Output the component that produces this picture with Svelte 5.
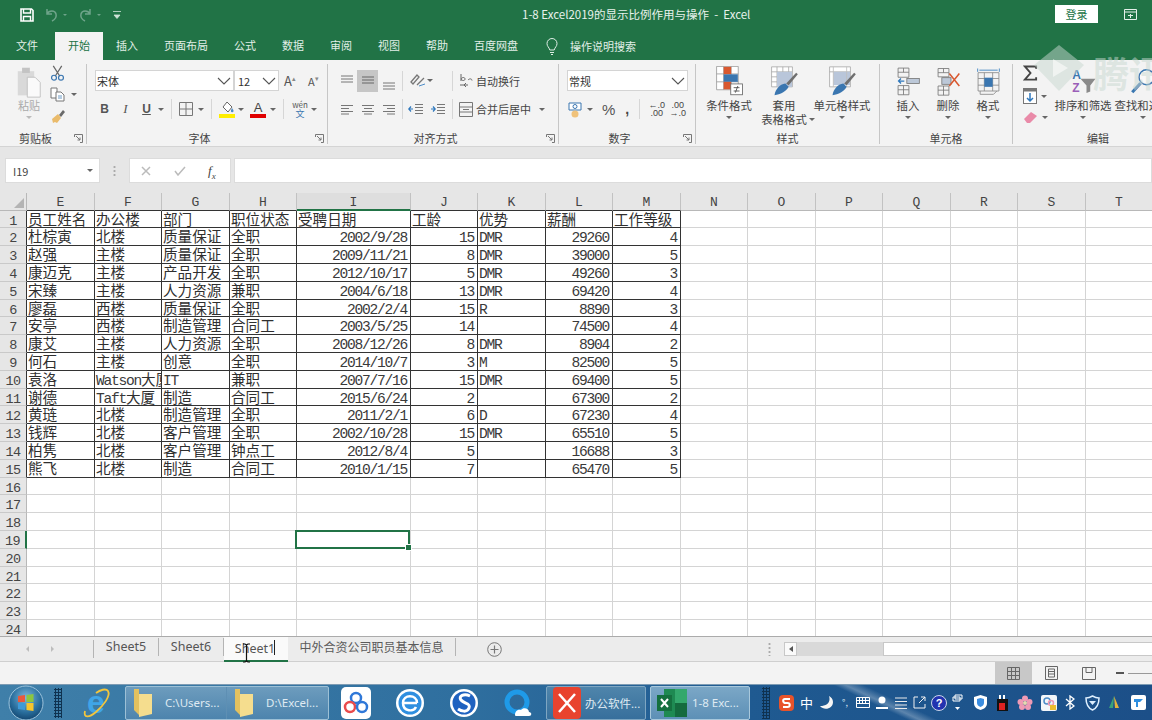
<script>
	const tabs = ['开始', '插入', '页面布局', '公式', '数据', '审阅', '视图', '帮助', '百度网盘'];
	const columns = [
		['E', 68], ['F', 67], ['G', 68], ['H', 67], ['I', 114], ['J', 67], ['K', 68], ['L', 67], ['M', 68],
		['N', 67], ['O', 68], ['P', 67], ['Q', 68], ['R', 67], ['S', 68], ['T', 67]
	];
	const template = '27px ' + columns.map((c) => c[1] + 'px').join(' ');
	const rightAligned = [4, 5, 7, 8];

	const rows = [
		['员工姓名', '办公楼', '部门', '职位状态', '受聘日期', '工龄', '优势', '薪酬', '工作等级'],
		['杜棕寅', '北楼', '质量保证', '全职', '2002/9/28', '15', 'DMR', '29260', '4'],
		['赵强', '主楼', '质量保证', '全职', '2009/11/21', '8', 'DMR', '39000', '5'],
		['康迈克', '主楼', '产品开发', '全职', '2012/10/17', '5', 'DMR', '49260', '3'],
		['宋臻', '主楼', '人力资源', '兼职', '2004/6/18', '13', 'DMR', '69420', '4'],
		['廖磊', '西楼', '质量保证', '全职', '2002/2/4', '15', 'R', '8890', '3'],
		['安亭', '西楼', '制造管理', '合同工', '2003/5/25', '14', '', '74500', '4'],
		['康艾', '主楼', '人力资源', '全职', '2008/12/26', '8', 'DMR', '8904', '2'],
		['何石', '主楼', '创意', '全职', '2014/10/7', '3', 'M', '82500', '5'],
		['袁洛', 'Watson大厦', 'IT', '兼职', '2007/7/16', '15', 'DMR', '69400', '5'],
		['谢德', 'Taft大厦', '制造', '合同工', '2015/6/24', '2', '', '67300', '2'],
		['黄琏', '北楼', '制造管理', '全职', '2011/2/1', '6', 'D', '67230', '4'],
		['钱辉', '北楼', '客户管理', '全职', '2002/10/28', '15', 'DMR', '65510', '5'],
		['柏隽', '北楼', '客户管理', '钟点工', '2012/8/4', '5', '', '16688', '3'],
		['熊飞', '北楼', '制造', '合同工', '2010/1/15', '7', '', '65470', '5']
	];

	const rowNumbers = Array.from({ length: 24 }, (_, i) => i + 1);

	function parts(text) {
		return text.split(/([A-Za-z0-9/]+)/).filter(Boolean);
	}
	function isAscii(part) {
		return /^[A-Za-z0-9/]+$/.test(part);
	}
</script>

{#snippet caret()}<i class="caret"></i>{/snippet}
{#snippet launcher()}
	<svg class="launcher" width="9" height="9" viewBox="0 0 9 9"><path d="M.5 3V.5H8.500V8.500H6M2 2l4 4M6 3.500V6H3.500" fill="none" stroke="#777"/></svg>
{/snippet}
{#snippet chevron()}
	<svg class="chevron" width="14" height="8" viewBox="0 0 14 8"><path d="M1 1l6 6 6-6" fill="none" stroke="#555" stroke-width="1.100"/></svg>
{/snippet}
{#snippet lines(kind)}
	<svg width="14" height="11" viewBox="0 0 14 11">
		{#if kind === 'left'}<path d="M1 1.500h12M1 4.500h8M1 7.500h12M1 10h8" stroke="#777" fill="none"/>{/if}
		{#if kind === 'center'}<path d="M1 1.500h12M3 4.500h8M1 7.500h12M3 10h8" stroke="#777" fill="none"/>{/if}
		{#if kind === 'right'}<path d="M1 1.500h12M5 4.500h8M1 7.500h12M5 10h8" stroke="#777" fill="none"/>{/if}
	</svg>
{/snippet}

<div class="window">
	<header class="titlebar">
		<div class="qat">
			<svg width="16" height="16" viewBox="0 0 16 16"><path d="M2 2h10.500L14 3.500V14H2z" fill="none" stroke="#fff" stroke-width="1.600"/><path d="M4.500 2v4h7V2M4.500 14V9.500h7V14" fill="none" stroke="#fff" stroke-width="1.400"/></svg>
			<svg width="26" height="14" viewBox="0 0 26 14"><path d="M4 1v5h5M4 6c2-4 8-4 9 0s-2 6-4 7" fill="none" stroke="#6ea48a" stroke-width="1.500"/><path d="M20 6l2 2 2-2" fill="#6ea48a"/></svg>
			<svg width="26" height="14" viewBox="0 0 26 14"><path d="M13 1v5H8M13 6c-2-4-8-4-9 0s2 6 4 7" fill="none" stroke="#6ea48a" stroke-width="1.500"/><path d="M20 6l2 2 2-2" fill="#6ea48a"/></svg>
			<svg width="10" height="10" viewBox="0 0 10 10"><path d="M1 1.500h8M2 5h6l-3 3.500z" fill="#cfe3d8" stroke="#cfe3d8" stroke-width=".8"/></svg>
		</div>
		<div class="doc-title">1-8 Excel2019的显示比例作用与操作&nbsp;&nbsp;-&nbsp;&nbsp;Excel</div>
		<button class="login">登录</button>
		<svg class="restore" width="13" height="11" viewBox="0 0 13 11"><path d="M.5.500h12v10H.500zM.5 3h12M4 6.500h5M6.500 5v4" fill="none" stroke="#e5f0ea"/></svg>
	</header>

	<nav class="tabs">
		<span class="tab first">文件</span>
		{#each tabs as tab}
			<span class="tab" class:active={tab === '开始'}>{tab}</span>
		{/each}
		<svg class="bulb" width="12" height="17" viewBox="0 0 12 17"><path d="M3.800 12C3 9 1 8.500 1 5.500a5 5 0 0 1 10 0C11 8.500 9 9 8.200 12zM4 14.500h4M5 16.500h2" fill="none" stroke="#dfeee6"/></svg>
		<span class="tell">操作说明搜索</span>
	</nav>

	<section class="ribbon">
		<div class="group clip">
			<div class="body">
				<div class="paste">
					<svg width="26" height="32" viewBox="0 0 28 37">
						<rect x="1" y="6" width="19" height="28" fill="#d9d9d9"/>
						<rect x="6" y="2" width="9" height="6" fill="#c3c3c3"/>
						<path d="M12 13h9l6 6v17H12z" fill="#fafafa" stroke="#bdbdbd"/>
					</svg>
					<span>粘贴</span>
					<i class="caret light"></i>
				</div>
				<div class="clip-tools">
					<svg width="15" height="16" viewBox="0 0 15 17"><path d="M3 1l7 11M12 1L5 12" stroke="#666" stroke-width="1.300" fill="none"/><circle cx="3.800" cy="13.500" r="2.600" fill="none" stroke="#3a76b0" stroke-width="1.300"/><circle cx="11.200" cy="13.500" r="2.600" fill="none" stroke="#3a76b0" stroke-width="1.300"/></svg>
					<span class="with-caret">
						<svg width="15" height="15" viewBox="0 0 15 15"><path d="M1 1h6v10H1z" fill="#fff" stroke="#777"/><path d="M6 5h5l3 3v6H6z" fill="#fff" stroke="#777"/><path d="M8 9h4M8 11h4" stroke="#6d9ac4"/></svg>
						{@render caret()}
					</span>
					<svg width="17" height="16" viewBox="0 0 17 16"><path d="M9 7l4-5 2 2-4 5z" fill="#6a6a6a"/><path d="M2 11l6-5 3 4-4 5-2-1-2 1z" fill="#eabb6b"/></svg>
				</div>
			</div>
			<div class="label"><span></span><span class="label-text">剪贴板</span>{@render launcher()}</div>
		</div>

		<div class="group font">
			<div class="body">
				<div class="row top">
					<div class="select name">宋体{@render chevron()}</div>
					<div class="select size">12{@render chevron()}</div>
					<span class="grow-a">A<sup>▴</sup></span>
					<span class="grow-a small">A<sup>▾</sup></span>
				</div>
				<div class="row bottom">
					<b class="fmt">B</b>
					<i class="fmt italic">I</i>
					<u class="fmt strong">U</u>
					<span class="u-caret">{@render caret()}</span>
					<i class="vsep"></i>
					<span class="with-caret g5">
						<svg width="14" height="14" viewBox="0 0 14 14"><path d="M.5.500h13v13H.500zM7 .5v13M.5 7h13" fill="none" stroke="#777"/></svg>
						{@render caret()}
					</span>
					<i class="vsep"></i>
					<span class="with-caret g2">
						<svg width="17" height="17" viewBox="0 0 17 17"><path d="M8 1l5 5-4 5-5-5z" fill="#fff" stroke="#666"/><path d="M13 7c1 1.500 1.500 2 1.500 3a1.300 1.300 0 0 1-2.600 0c0-1 .6-1.500 1.100-3z" fill="#4d8cc7"/><rect y="13" width="16" height="4" fill="#ffee00"/></svg>
						{@render caret()}
					</span>
					<span class="with-caret g4">
						<span class="font-color">A</span>
						{@render caret()}
					</span>
					<i class="vsep"></i>
					<span class="with-caret g2">
						<span class="wen"><small>wén</small>文</span>
						{@render caret()}
					</span>
				</div>
			</div>
			<div class="label"><span></span><span class="label-text">字体</span>{@render launcher()}</div>
		</div>

		<div class="group align">
			<div class="body">
				<div class="row top">
					<span class="al"><svg width="14" height="11" viewBox="0 0 14 11"><path d="M1 1h12M1 4h12M1 7h12" stroke="#777" fill="none"/></svg></span>
					<span class="al on"><svg width="14" height="11" viewBox="0 0 14 11"><path d="M1 2h12M1 5h12M1 8h12" stroke="#666" fill="none"/></svg></span>
					<span class="al low"><svg width="14" height="11" viewBox="0 0 14 11"><path d="M1 4h12M1 7h12M1 10h12" stroke="#777" fill="none"/></svg></span>
					<i class="vsep first-sep"></i>
					<span class="with-caret orient">
						<svg width="17" height="14" viewBox="0 0 17 14"><path d="M1 8l6-7 2 2-6 7zM7 11l7-7" fill="none" stroke="#777" stroke-width="1.300"/><path d="M9 12l6-2" stroke="#4d8cc7"/></svg>
						{@render caret()}
					</span>
					<i class="vsep wrap-sep"></i>
					<span class="wrap">
						<svg width="14" height="16" viewBox="0 0 14 16"><path d="M2 1v7M2 6c1-2 4-2 4 0s-3 2-4 0M9 7c2-2 4-1 4 .5M1 12h8M7 10l-2 2 2 2" fill="none" stroke="#666"/></svg>
						自动换行
					</span>
				</div>
				<div class="row bottom">
					<span class="al">{@render lines('left')}</span>
					<span class="al">{@render lines('center')}</span>
					<span class="al">{@render lines('right')}</span>
					<i class="vsep indent-sep"></i>
					<svg class="indent" width="15" height="12" viewBox="0 0 15 12"><path d="M7 1.500h8M7 4.500h8M7 7.500h8M7 10.500h8" stroke="#777"/><path d="M5 6H1M3 3.500L.8 6 3 8.500" fill="none" stroke="#2f78bd" stroke-width="1.200"/></svg>
					<svg class="indent" width="15" height="12" viewBox="0 0 15 12"><path d="M7 1.500h8M7 4.500h8M7 7.500h8M7 10.500h8" stroke="#777"/><path d="M1 6h4M3 3.500L5.200 6 3 8.500" fill="none" stroke="#2f78bd" stroke-width="1.200"/></svg>
					<i class="vsep merge-sep"></i>
					<span class="wrap">
						<svg width="14" height="15" viewBox="0 0 14 15"><path d="M.5.500h13v14H.500zM.5 5h13M.5 10h13M4 7.500h6" fill="none" stroke="#777"/></svg>
						合并后居中
					</span>
					<span class="merge-caret">{@render caret()}</span>
				</div>
			</div>
			<div class="label"><span></span><span class="label-text">对齐方式</span>{@render launcher()}</div>
		</div>

		<div class="group number">
			<div class="body">
				<div class="row top">
					<div class="select general">常规{@render chevron()}</div>
				</div>
				<div class="row bottom">
					<span class="with-caret">
						<svg width="17" height="17" viewBox="0 0 17 17"><path d="M2 2h12v7H2z" fill="#fff" stroke="#3a76b0"/><circle cx="8" cy="5.500" r="2" fill="none" stroke="#3a76b0"/><circle cx="8" cy="13" r="3.500" fill="#f0c27a"/></svg>
						{@render caret()}
					</span>
					<span class="percent">%</span>
					<span class="comma">,</span>
					<i class="vsep"></i>
					<span class="decimal"><small>←.0</small><small>.00</small></span>
					<span class="decimal"><small>.00</small><small>→.0</small></span>
				</div>
			</div>
			<div class="label"><span></span><span class="label-text">数字</span>{@render launcher()}</div>
		</div>

		<div class="group styles">
			<div class="body big-row">
				<div class="big w60">
					<svg width="32" height="36" viewBox="0 0 32 36">
						<path d="M.5.500h26v28H.500zM9 .5v28M18 .5v28M.5 9.500h26M.5 19h26" fill="#fff" stroke="#9a9a9a"/>
						<rect x="9" y="1" width="9" height="9" fill="#d9582f"/><rect x="9" y="10" width="17" height="9" fill="#3a76b0"/><rect x="9" y="19" width="9" height="9" fill="#d9582f"/>
						<rect x="17.500" y="21.500" width="14" height="13" fill="#fff" stroke="#666"/>
						<path d="M21 26h7M21 30h7M23 32l3-8" stroke="#444" fill="none"/>
					</svg>
					<span>条件格式</span>
					{@render caret()}
				</div>
				<div class="big w50">
					<svg width="32" height="36" viewBox="0 0 32 36">
						<path d="M.5 1h25v24H.500zM7 1v24M14 1v24M21 1v24M.5 7h25M.5 13h25M.5 19h25" fill="#fff" stroke="#a8a8a8"/>
						<rect x="7" y="7" width="18" height="18" fill="#b9c6da"/>
						<path d="M30 8l2 2-11 13-3-2z" fill="#6f6f6f"/>
						<path d="M4 35c1-7 6-13 13-14l4 4c-3 6-10 9-17 10z" fill="#3a76b0"/>
					</svg>
					<span>套用</span>
					<span class="nowrap">表格格式{@render caret()}</span>
				</div>
				<div class="big w66">
					<svg width="32" height="36" viewBox="0 0 32 36">
						<path d="M.5 1h25v24H.500zM.5 7h25" fill="#fff" stroke="#a8a8a8"/>
						<rect x="5" y="7" width="20" height="16" fill="#b9c6da"/>
						<path d="M5 1v24M21 1v24" stroke="#bdbdbd"/>
						<path d="M30 8l2 2-11 13-3-2z" fill="#6f6f6f"/>
						<path d="M4 35c1-7 6-13 13-14l4 4c-3 6-10 9-17 10z" fill="#3a76b0"/>
					</svg>
					<span>单元格样式</span>
					{@render caret()}
				</div>
			</div>
			<div class="label plain"><span class="label-text">样式</span></div>
		</div>

		<div class="group cells">
			<div class="body big-row">
				<div class="big w40">
					<svg width="28" height="36" viewBox="0 0 28 36">
						<path d="M1.500 3h13v11h-13zM8 3v5M1.500 8h13M1.500 24h13v11h-13zM8 24v11M1.500 29h13" fill="none" stroke="#777" transform="translate(0 -.5)"/>
						<rect x="12" y="15" width="15" height="6" fill="#bcc8d8" stroke="#777"/>
						<path d="M9 18H2M5 15l-3 3 3 3" fill="none" stroke="#2f78bd" stroke-width="1.500"/>
					</svg>
					<span>插入</span>
					{@render caret()}
				</div>
				<div class="big w40">
					<svg width="28" height="36" viewBox="0 0 28 36">
						<path d="M1.500 3h13v10h-13zM8 3v5M1.500 8h13M1.500 24h13v11h-13zM8 24v11M1.500 29h13" fill="none" stroke="#777"/>
						<rect x="6" y="14" width="11" height="8" fill="#bcc8d8" stroke="#777"/>
						<path d="M15 9l12 15M27 9L15 24" stroke="#d9582f" stroke-width="1.800"/>
					</svg>
					<span>删除</span>
					{@render caret()}
				</div>
				<div class="big w40">
					<svg width="28" height="36" viewBox="0 0 28 36">
						<path d="M1 3v4M27 3v4M3 5h22" stroke="#2f78bd" fill="none"/>
						<path d="M1.500 8h25v22h-25zM9 8v22M19 8v22M1.500 15h25M1.500 23h25M4 30v4h16l4-4" fill="none" stroke="#888"/>
						<rect x="9" y="14" width="10" height="11" fill="#3a76b0"/>
					</svg>
					<span>格式</span>
					{@render caret()}
				</div>
			</div>
			<div class="label plain"><span class="label-text">单元格</span></div>
		</div>

		<div class="group edit">
			<div class="body big-row">
				<div class="edit-tools">
					<svg width="15" height="16" viewBox="0 0 16 17"><path d="M14 4V1.500H2L8 8.500 2 15.500h12V13" fill="none" stroke="#444" stroke-width="2"/></svg>
					<span class="with-caret">
						<svg width="14" height="16" viewBox="0 0 14 16"><rect x=".5" y=".5" width="13" height="15" fill="#fff" stroke="#777"/><rect x=".5" y=".5" width="13" height="3" fill="#777"/><path d="M7 5v8M4 10l3 3 3-3" fill="none" stroke="#2f78bd" stroke-width="1.500"/></svg>
						{@render caret()}
					</span>
					<span class="with-caret">
						<svg width="15" height="13" viewBox="0 0 15 13"><path d="M1 8l7-7 6 4-7 7H4z" fill="#e98aa8"/></svg>
						{@render caret()}
					</span>
				</div>
				<div class="big w60 plain-w">
					<svg width="36" height="36" viewBox="0 0 36 36">
						<text x="3" y="15" class="az blue">A</text>
						<text x="3" y="32" class="az purple">Z</text>
						<path d="M14 15h20l-7 9v8l-5 2V24z" fill="#8a8a8a"/>
					</svg>
					<span>排序和筛选</span>
					{@render caret()}
				</div>
				<div class="big w60 plain-w">
					<svg width="36" height="36" viewBox="0 0 36 36">
						<circle cx="22" cy="13" r="10" fill="#fff" fill-opacity=".5" stroke="#3a76b0" stroke-width="2"/>
						<path d="M14 21L3 33" stroke="#3a76b0" stroke-width="4"/>
					</svg>
					<span>查找和选择</span>
					{@render caret()}
				</div>
			</div>
			<div class="label plain edit-label"><span class="label-text">编辑</span></div>
		</div>
	</section>

	<section class="formula">
		<div class="name-box">I19{@render caret()}</div>
		<div class="grip"></div>
		<div class="fx-box">
			<svg width="10" height="10" viewBox="0 0 10 10"><path d="M1 1l8 8M9 1L1 9" stroke="#bbb" stroke-width="1.500"/></svg>
			<svg width="12" height="10" viewBox="0 0 12 10"><path d="M1 5l3 4 7-8" stroke="#bbb" stroke-width="1.500" fill="none"/></svg>
			<em>f<sub>x</sub></em>
		</div>
		<div class="input"></div>
	</section>

	<section class="sheet" style="grid-template-columns: {template}">
		<div class="corner"><i></i></div>
		{#each columns as col, c}
			<div class="col-head" class:selected-col={col[0] === 'I'} class:table-col={c < 9}>{col[0]}</div>
		{/each}
		{#each rowNumbers as n}
			<div class="row-head" class:table-row={n <= 15} class:selected-row={n === 19}>{n}</div>
			{#each columns as col, c}
				{@const value = n <= 15 && c < 9 ? rows[n - 1][c] : ''}
				<div
					class="cell"
					class:boxed={n <= 15 && c < 9}
					class:num={n > 1 && rightAligned.includes(c)}
					class:current={n === 19 && col[0] === 'I'}
				>
					{#each parts(value) as part}
						{#if isAscii(part)}<span class="ascii">{part}</span>{:else}{part}{/if}
					{/each}
					{#if n === 19 && col[0] === 'I'}<i class="frame"><i class="handle"></i></i>{/if}
				</div>
			{/each}
		{/each}
	</section>

	<section class="sheetbar">
		<div class="nav-arrows"><i class="arrow left"></i><i class="arrow right"></i></div>
		<span class="sheet-tab">Sheet5</span>
		<span class="sheet-tab">Sheet6</span>
		<span class="sheet-tab active">Sheet1<i class="text-caret"></i>
			<svg class="ibeam" width="9" height="20" viewBox="0 0 9 20"><path d="M1 1h2l1.500 1L6 1h2M4.500 2v16M1 19h2l1.500-1L6 19h2" fill="none" stroke="#111" stroke-width="1.200"/></svg>
		</span>
		<span class="sheet-tab last">中外合资公司职员基本信息</span>
		<svg class="add" width="15" height="15" viewBox="0 0 15 15"><circle cx="7.500" cy="7.500" r="6.800" fill="none" stroke="#777"/><path d="M7.500 3.500v8M3.500 7.500h8" stroke="#777" stroke-width="1.200"/></svg>
		<div class="hscroll">
			<i class="dots"></i>
			<span class="scroll-btn"><i></i></span>
			<span class="track"></span>
			<span class="thumb"></span>
		</div>
	</section>

	<footer class="status">
		<span class="view on"><svg width="13" height="13" viewBox="0 0 13 13"><path d="M.5.500h12v12H.500zM4.500.5v12M8.500.5v12M.5 4.500h12M.5 8.500h12" fill="none" stroke="#666"/></svg></span>
		<span class="view"><svg width="13" height="14" viewBox="0 0 13 14"><path d="M.5.500h12v13H.500zM3.500 3h6v8h-6zM3.500 5.500h6M3.500 8h6" fill="none" stroke="#666"/></svg></span>
		<span class="view"><svg width="14" height="13" viewBox="0 0 14 13"><path d="M.5.500h13v12H.500zM4 .5v5h6V.500" fill="none" stroke="#666"/></svg></span>
		<span class="zoom-minus"></span>
		<span class="zoom-line"></span>
	</footer>

	<div class="taskbar">
		<svg class="orb" width="36" height="36" viewBox="0 0 36 36">
			<defs>
				<radialGradient id="orbfill" cx=".5" cy=".35" r=".7"><stop offset="0" stop-color="#7fb9dc"/><stop offset=".6" stop-color="#2a6f9e"/><stop offset="1" stop-color="#0f3f68"/></radialGradient>
			</defs>
			<circle cx="18" cy="18" r="17" fill="url(#orbfill)" stroke="#9cc3dc"/>
			<path d="M10 11l7-1v7h-7z" fill="#e9593c"/><path d="M18.500 10l7-1v8h-7z" fill="#8cc63f"/><path d="M10 18h7v7l-7-1z" fill="#3f9ad8"/><path d="M18.500 18h7v8l-7-1z" fill="#f7c52d"/>
		</svg>
		<i class="task-dots"></i>
		<svg class="ie" width="32" height="32" viewBox="0 0 32 32">
			<text x="16" y="26" class="ie-e">e</text>
			<path d="M5 24C3 31 9 31 16 25S31 9 28 4c-2-3-8-1-12 2" fill="none" stroke="#f3c63d" stroke-width="1.800"/>
		</svg>
		<div class="win-group">
			<span class="task-btn folder-btn">
				<svg width="20" height="30" viewBox="0 0 20 30"><path d="M1 1h5v26L1 22z" fill="#e3c15f"/><path d="M6 6h13v20l-13 3z" fill="#f5dd8e"/></svg>
				<span>C:\Users...</span>
			</span>
			<span class="task-btn folder-btn">
				<svg width="20" height="30" viewBox="0 0 20 30"><path d="M1 1h5v26L1 22z" fill="#e3c15f"/><path d="M6 6h13v20l-13 3z" fill="#f5dd8e"/></svg>
				<span>D:\Excel...</span>
			</span>
		</div>
		<div class="app-icons">
			<svg width="30" height="32" viewBox="0 0 30 32"><rect width="30" height="32" rx="5" fill="#fff"/><circle cx="15" cy="11" r="5" fill="none" stroke="#2f78d8" stroke-width="2.500"/><circle cx="9" cy="20" r="5" fill="none" stroke="#e94b4b" stroke-width="2.500"/><circle cx="21" cy="20" r="5" fill="none" stroke="#2f78d8" stroke-width="2.500"/></svg>
			<svg width="30" height="30" viewBox="0 0 30 30"><circle cx="15" cy="15" r="14" fill="#fff"/><circle cx="15" cy="15" r="11.500" fill="#2f8fe0"/><path d="M8 15h14M22 15c0-9-14-9-14 0s11 9 13 4" fill="none" stroke="#fff" stroke-width="2.500"/></svg>
			<svg width="30" height="30" viewBox="0 0 30 30"><circle cx="15" cy="15" r="14" fill="#fff"/><circle cx="15" cy="15" r="11.500" fill="#1f62c0"/><path d="M21 8c-6-3-12 0-9 4s10 3 8 8-8 3-11 1" fill="none" stroke="#fff" stroke-width="3"/></svg>
			<svg width="30" height="30" viewBox="0 0 30 30"><circle cx="14" cy="14" r="10" fill="none" stroke="#1f9ae8" stroke-width="5"/><path d="M12 27c0-5 4-6 6-5 2-3 8-2 8 2 3 0 3 4 0 4H14c-1 0-2 0-2-1z" fill="#fff"/></svg>
		</div>
		<span class="task-btn wps">
			<svg width="28" height="32" viewBox="0 0 28 32"><rect width="28" height="32" rx="4" fill="#e8432e"/><path d="M6 7l16 18M22 7L6 25" stroke="#fff" stroke-width="2.500"/></svg>
			<span>办公软件...</span>
		</span>
		<span class="task-btn excel">
			<svg width="30" height="28" viewBox="0 0 30 28"><rect x="7" width="23" height="28" fill="#1e8a52"/><rect x="18" y="0" width="12" height="14" fill="#33a86c"/><rect x="18" y="14" width="12" height="14" fill="#146b3e"/><rect y="6" width="15" height="16" fill="#15703f"/><path d="M4 10l7 8M11 10l-7 8" stroke="#fff" stroke-width="2"/></svg>
			<span>1-8 Exc...</span>
		</span>
		<i class="task-dots tray-dots"></i>
		<div class="tray">
			<svg width="15" height="16" viewBox="0 0 15 16"><rect width="15" height="16" rx="4" fill="#e8532a"/><path d="M11 4H6C3 4 4 8 6.500 8h2c3 0 3 4 0 4H4" fill="none" stroke="#fff" stroke-width="2"/></svg>
			<span class="tray-text">中</span>
			<svg width="15" height="15" viewBox="0 0 15 15"><path d="M10 1c2 6-2 10-9 10 4 5 13 3 13-4 0-3-2-5-4-6z" fill="#f5f5f5"/></svg>
			<span class="tray-dots-small">°,</span>
			<svg width="14" height="11" viewBox="0 0 14 11"><path d="M.5.500h13v10H.500zM.5 3.500h13M.5 6.500h13M3.500.5v6M6.500.5v6M9.500.5v6" fill="none" stroke="#fff"/></svg>
			<svg width="14" height="14" viewBox="0 0 14 14"><circle cx="7" cy="4" r="3.500" fill="#fff"/><path d="M1 11h12v2H1z" fill="#fff"/></svg>
			<svg width="14" height="14" viewBox="0 0 14 14"><path d="M1 2h12M1 5.500h12M1 9h12M1 12.500h12" stroke="#eaeaea"/></svg>
			<svg width="13" height="13" viewBox="0 0 13 13"><path d="M5 1H1v11h11V8M6 7l6-6M8 1h4v4" fill="none" stroke="#f0f0f0"/></svg>
			<svg width="16" height="16" viewBox="0 0 16 16"><circle cx="8" cy="8" r="7.500" fill="#2233b0" stroke="#cdd6ea"/><text x="8" y="12" class="q">?</text></svg>
			<svg width="11" height="18" viewBox="0 0 11 18"><path d="M3 1h7v4H3zM1 3h7v4H1z" fill="none" stroke="#fff"/><path d="M3 13h5l-2.500 3z" fill="#fff"/></svg>
			<div class="tray-right">
				<svg width="15" height="17" viewBox="0 0 15 17"><path d="M7.500 1L14 3v6c0 4-3 6-6.500 7C4 15 1 13 1 9V3z" fill="#fff"/><path d="M7.500 4L11 5v4c0 2-1.500 3-3.500 4C5.500 12 4 11 4 9V5z" fill="#3b8de0"/></svg>
				<svg width="13" height="18" viewBox="0 0 13 18"><rect x="1" y="5" width="11" height="12" fill="#111"/><rect x="3" y="9" width="6" height="7" fill="#d22"/><path d="M4 5V1M8 5V1" stroke="#fff" stroke-width="2"/></svg>
				<svg width="16" height="16" viewBox="0 0 16 16"><circle cx="8" cy="3.500" r="3" fill="#ef9ab5"/><circle cx="3.500" cy="7" r="3" fill="#ef9ab5"/><circle cx="12.500" cy="7" r="3" fill="#ef9ab5"/><circle cx="5" cy="12" r="3" fill="#ef9ab5"/><circle cx="11" cy="12" r="3" fill="#ef9ab5"/><circle cx="8" cy="8" r="2" fill="#e8d9b0"/></svg>
				<svg width="16" height="16" viewBox="0 0 16 16"><rect width="16" height="16" rx="2" fill="#f2f6fa"/><circle cx="6" cy="6" r="3" fill="none" stroke="#4d8cc7" stroke-width="1.500"/><circle cx="10" cy="8" r="2.500" fill="none" stroke="#ef9ab5" stroke-width="1.500"/><rect x="9" y="10" width="6" height="5" fill="#eebd2f"/></svg>
				<svg width="10" height="15" viewBox="0 0 10 15"><path d="M1 4l8 7-4 3V1l4 3-8 7" fill="none" stroke="#fff" stroke-width="1.300"/></svg>
				<svg class="after-bt" width="15" height="16" viewBox="0 0 15 16"><path d="M7.500 1C10 2.500 12 3 14 3c0 6-2 10-6.500 12C3 13 1 9 1 3c2 0 4-.5 6.500-2z" fill="none" stroke="#dff0ff" stroke-width="1.500"/><path d="M4 6h7L7.500 10z" fill="#dff0ff"/></svg>
				<svg width="12" height="15" viewBox="0 0 12 15"><path d="M6 1L1 13h4z" fill="#3aa27a"/><path d="M6 1l5 12H7z" fill="#e3b23c"/></svg>
				<svg class="after-delta" width="15" height="15" viewBox="0 0 15 15"><rect width="15" height="15" rx="2" fill="#fff"/><path d="M3 4h9L9 7H7v5H5V7H3z" fill="#2f8fe0"/></svg>
			</div>
		</div>
	</div>

	<div class="watermark">
		<svg width="52" height="50" viewBox="0 0 52 50"><path d="M26 0l25 20-25 26L1 20z" fill="#c8d7d0" fill-opacity=".5"/><path d="M20 14l15 9-15 9z" fill="#fff" fill-opacity=".55"/></svg>
		<span>腾讯</span>
	</div>
</div>

<style>
	:global(body) {
		margin: 0;
		overflow: hidden;
	}

	.window {
		position: relative;
		width: 1152px;
		height: 720px;
		overflow: hidden;
		display: flex;
		flex-direction: column;
		background: #e6e6e6;
		font-family: 'Noto Sans CJK SC', 'Noto Sans', sans-serif;
		font-size: 11px;
		color: #444;
	}

	svg {
		display: block;
		flex: none;
	}

	.titlebar {
		height: 32px;
		flex: none;
		background: #217346;
		display: flex;
		align-items: center;
		color: #e8f2ec;
	}

	.qat {
		display: flex;
		align-items: center;
		width: 522px;
		box-sizing: border-box;
		padding: 0 0 2px 19px;
		gap: 8px;
	}

	.qat svg:last-child {
		margin-left: 1px;
	}

	.doc-title {
		width: 533px;
		padding-bottom: 5px;
		white-space: nowrap;
		font-size: 11.500px;
	}

	.login {
		width: 43px;
		height: 18px;
		padding: 0;
		margin: -4px 26px 0 0;
		border: 0;
		background: #fff;
		color: #217346;
		font: inherit;
		font-size: 11px;
	}

	.restore {
		margin-top: -4px;
	}

	.tabs {
		height: 28px;
		flex: none;
		background: #217346;
		display: flex;
		align-items: center;
		padding-left: 3px;
		color: #e2efe8;
		font-size: 11px;
	}

	.tab {
		height: 28px;
		line-height: 26px;
		padding: 0 13px;
	}

	.tab.first {
		margin-right: 4px;
	}

	.tab.active {
		background: #f3f3f3;
		color: #217346;
	}

	.bulb {
		margin: 0 12px 0 15px;
	}

	.tell {
		line-height: 26px;
	}

	.ribbon {
		height: 87px;
		flex: none;
		background: #f3f3f3;
		border-bottom: 1px solid #d4d4d4;
		box-sizing: border-box;
		padding-top: 4px;
		display: flex;
		align-items: flex-start;
		color: #444;
	}

	.group {
		height: 80px;
		flex: none;
		box-sizing: border-box;
		display: flex;
		flex-direction: column;
		border-right: 1px solid #c6c6c6;
	}

	.clip { width: 87px; }
	.font { width: 241px; }
	.align { width: 231px; }
	.number { width: 137px; }
	.styles { width: 184px; }
	.cells { width: 133px; }
	.edit { width: 140px; border-right: 0; overflow: hidden; }

	.body {
		height: 66px;
		flex: none;
	}

	.label {
		display: grid;
		grid-template-columns: 1fr auto 1fr;
		align-items: center;
		height: 14px;
		line-height: 14px;
		padding-right: 3px;
		margin-top: 1px;
	}

	.label .label-text {
		margin-right: 12px;
	}

	.label.plain {
		display: flex;
		justify-content: center;
		padding-right: 0;
	}

	.label.plain .label-text {
		margin-right: 0;
	}

	.edit-label {
		padding-left: 30px;
	}

	.label-text {
		white-space: nowrap;
	}

	.launcher {
		justify-self: end;
	}

	.caret {
		display: inline-block;
		flex: none;
		width: 0;
		height: 0;
		border: 3px solid transparent;
		border-top: 3px solid #666;
		border-bottom: 0;
	}

	.caret.light {
		border-top-color: #bbb;
	}

	.with-caret {
		display: flex;
		align-items: center;
		gap: 6px;
	}

	.vsep {
		display: block;
		width: 1px;
		height: 20px;
		flex: none;
		background: #d6d6d6;
	}

	.clip .body {
		display: flex;
		padding-left: 15px;
		gap: 7px;
	}

	.paste {
		width: 28px;
		display: flex;
		flex-direction: column;
		align-items: center;
		color: #aaa;
		padding-top: 2px;
		line-height: 14px;
		font-size: 11px;
	}

	.paste .caret {
		margin-top: 4px;
	}

	.clip-tools {
		display: flex;
		flex-direction: column;
		gap: 6px;
		padding-top: 1px;
	}

	.row {
		display: flex;
		align-items: center;
	}

	.row.top {
		height: 21px;
		margin-top: 6px;
	}

	.row.bottom {
		height: 20px;
		margin-top: 8px;
	}

	.select {
		box-sizing: border-box;
		height: 21px;
		flex: none;
		background: #fff;
		border: 1px solid #d4d4d4;
		display: flex;
		align-items: center;
		justify-content: space-between;
		padding: 0 2px 0 1px;
		color: #333;
		font-size: 11px;
	}

	.font .row {
		padding-left: 8px;
	}

	.name { width: 139px; }
	.size { width: 45px; margin-right: 5px; padding-left: 3px; }

	.grow-a {
		width: 24px;
		flex: none;
		font-size: 13px;
		color: #555;
		white-space: nowrap;
	}

	.grow-a.small {
		width: 18px;
		font-size: 11px;
	}

	.grow-a sup {
		font-size: 7px;
		color: #888;
		vertical-align: 5px;
		line-height: 0;
	}

	.font .row.bottom {
		padding-left: 7px;
	}

	.fmt {
		width: 21px;
		flex: none;
		text-align: center;
		font-family: 'Liberation Sans', sans-serif;
		font-size: 12px;
		color: #555;
		text-decoration-thickness: 1px;
	}

	.fmt.italic {
		font-family: 'Liberation Serif', serif;
		font-size: 13px;
	}

	.fmt.strong {
		font-weight: 700;
	}

	.u-caret {
		display: flex;
		margin-left: 1px;
	}

	.font .bottom .vsep {
		margin: 0 7px;
	}

	.g5 { gap: 5px; }
	.g4 { gap: 4px; }
	.g2 { gap: 2px; }

	.font-color {
		width: 16px;
		height: 17px;
		box-sizing: border-box;
		border-bottom: 4px solid #e00000;
		text-align: center;
		line-height: 13px;
		font-family: 'Liberation Sans', sans-serif;
		font-size: 13px;
		margin-left: 6px;
	}

	.wen {
		width: 18px;
		display: flex;
		flex-direction: column;
		align-items: center;
		font-size: 9px;
		line-height: 9px;
		color: #3a76b0;
	}

	.wen small {
		font-size: 8px;
		color: #555;
	}

	.align .row {
		padding-left: 8px;
	}

	.al {
		width: 21px;
		flex: none;
		display: flex;
		align-items: center;
		justify-content: center;
		height: 21px;
	}

	.al.on {
		background: #c6c6c6;
		height: 22px;
	}

	.al.low {
		padding-top: 8px;
		box-sizing: border-box;
	}

	.first-sep { margin: 0 7px 0 3px; }
	.wrap-sep { margin: 0 6px 0 19px; }
	.indent-sep { margin: 0 5px 0 3px; }
	.merge-sep { margin: 0 6px 0 0; }

	.orient {
		gap: 0;
	}

	.indent {
		margin-right: 7px;
	}

	.wrap {
		display: flex;
		align-items: center;
		gap: 3px;
		white-space: nowrap;
		color: #444;
	}

	.merge-caret {
		margin-left: 8px;
		display: flex;
	}

	.number .top {
		padding-left: 8px;
	}

	.general {
		width: 121px;
	}

	.number .bottom {
		padding-left: 8px;
	}

	.number .with-caret {
		gap: 3px;
	}

	.percent {
		margin-left: 9px;
		font-size: 15px;
		font-family: 'Liberation Sans', sans-serif;
		color: #555;
	}

	.comma {
		margin-left: 10px;
		font-size: 14px;
		font-weight: 700;
		line-height: 12px;
		font-family: 'Liberation Sans', sans-serif;
	}

	.number .vsep {
		margin: 0 6px 0 10px;
	}

	.decimal {
		width: 21px;
		display: flex;
		flex-direction: column;
		align-items: center;
		font-family: 'Liberation Sans', sans-serif;
		line-height: 8px;
	}

	.decimal small {
		font-size: 9px;
		white-space: nowrap;
	}

	.big-row {
		display: flex;
		align-items: flex-start;
	}

	.big {
		flex: none;
		display: flex;
		flex-direction: column;
		align-items: center;
		line-height: 14px;
		padding-top: 2px;
		white-space: nowrap;
		font-size: 11.400px;
	}

	.big svg {
		width: 27px;
		height: 30px;
		margin-bottom: 2px;
	}

	.big > .caret {
		margin-top: 4px;
	}

	.nowrap {
		display: inline-flex;
		align-items: center;
		gap: 2px;
		margin-left: 8px;
	}

	.w60 { width: 60px; margin-left: 3px; }
	.w50 { width: 50px; }
	.w66 { width: 66px; }
	.w40 { width: 40px; }
	.w60.plain-w { margin-left: 0; }

	.cells .big-row {
		padding-left: 8px;
	}

	.edit-tools {
		width: 40px;
		flex: none;
		padding: 1px 0 0 10px;
		box-sizing: border-box;
		display: flex;
		flex-direction: column;
		gap: 7px;
		align-items: flex-start;
	}

	.edit-tools .with-caret {
		gap: 4px;
	}

	.az {
		font-family: 'Liberation Sans', sans-serif;
		font-size: 16px;
		font-weight: 700;
	}

	.az.blue { fill: #3a76b0; }
	.az.purple { fill: #9a5fb8; }

	.formula {
		height: 46px;
		flex: none;
		box-sizing: border-box;
		padding: 11px 0 10px 5px;
		background: #e6e6e6;
		display: flex;
		align-items: stretch;
		font-size: 11px;
	}

	.name-box {
		width: 95px;
		background: #fff;
		display: flex;
		align-items: center;
		justify-content: space-between;
		padding: 0 6px 0 7px;
		box-sizing: border-box;
		color: #444;
		border: 1px solid #dcdcdc;
	}

	.grip {
		width: 3px;
		margin: 7px 13px 7px 13px;
		background: radial-gradient(circle, #aaa 1px, transparent 1.200px) 0 0 / 3px 4px;
	}

	.fx-box {
		width: 102px;
		box-sizing: border-box;
		background: #fff;
		border: 1px solid #dcdcdc;
		display: flex;
		align-items: center;
		padding-left: 11px;
		gap: 23px;
	}

	.fx-box em {
		font-family: 'Liberation Serif', serif;
		font-size: 13px;
		color: #444;
		margin-left: -1px;
	}

	.fx-box sub {
		font-size: 9px;
		line-height: 0;
	}

	.input {
		flex: 1;
		margin-left: 3px;
		background: #fff;
		border: 1px solid #dcdcdc;
	}

	.sheet {
		height: 443px;
		flex: none;
		overflow: hidden;
		display: grid;
		grid-auto-rows: 17.8px;
		grid-template-rows: 17.6px;
		background: #fff;
		font-family: 'Liberation Mono', 'Noto Sans CJK SC', monospace;
		font-size: 14.6px;
		color: #2f2f2f;
	}

	.corner {
		background: #e6e6e6;
		border-right: 1px solid #b8b8b8;
		border-bottom: 1px solid #b8b8b8;
		box-sizing: border-box;
		position: relative;
	}

	.corner i {
		position: absolute;
		right: 2px;
		bottom: 2px;
		border: 5px solid transparent;
		border-right-color: #b4b4b4;
		border-bottom-color: #b4b4b4;
	}

	.col-head {
		background: #e6e6e6;
		box-sizing: border-box;
		border-right: 1px solid #c2c2c2;
		border-bottom: 1px solid #b8b8b8;
		text-align: center;
		font-size: 13px;
		line-height: 20px;
		color: #444;
	}

	.col-head.table-col {
		border-bottom-color: #333;
	}

	.col-head.selected-col {
		background: #dedede;
		border-bottom: 2px solid #217346;
	}

	.row-head {
		background: #e6e6e6;
		box-sizing: border-box;
		border-right: 1px solid #b8b8b8;
		border-bottom: 1px solid #c9c9c9;
		text-align: center;
		line-height: 21px;
		font-size: 13.500px;
		letter-spacing: -.6px;
		color: #444;
		overflow: hidden;
	}

	.row-head.table-row {
		border-right-color: #333;
	}

	.row-head.selected-row {
		border-right: 2px solid #217346;
	}

	.cell {
		box-sizing: border-box;
		border-right: 1px solid #d4d4d4;
		border-bottom: 1px solid #d4d4d4;
		white-space: nowrap;
		overflow: hidden;
		line-height: 16px;
		padding: 2px 0 0 1px;
		position: relative;
	}

	.cell.boxed {
		border-right-color: #333;
		border-bottom-color: #333;
	}

	.cell.num {
		text-align: right;
		padding-right: 3px;
	}

	.ascii {
		letter-spacing: -1.260px;
		color: #3a3a3a;
	}

	.cell.current {
		overflow: visible;
		z-index: 2;
	}

	.frame {
		position: absolute;
		left: -2px;
		right: 0;
		top: -1px;
		bottom: -1px;
		border: 2px solid #217346;
	}

	.handle {
		position: absolute;
		right: -4px;
		bottom: -4px;
		width: 5px;
		height: 5px;
		background: #217346;
		border: 1px solid #fff;
	}

	.sheetbar {
		height: 26px;
		flex: none;
		box-sizing: border-box;
		border-top: 1px solid #ababab;
		border-bottom: 1px solid #cfcfcf;
		background: #ececec;
		display: flex;
		align-items: center;
		position: relative;
		font-size: 12.500px;
		color: #555;
	}

	.nav-arrows {
		width: 94px;
		flex: none;
		box-sizing: border-box;
		padding-left: 26px;
		display: flex;
		gap: 22px;
		border-right: 1px solid #b4b4b4;
		height: 18px;
		align-items: center;
	}

	.arrow {
		width: 0;
		height: 0;
		border: 3px solid transparent;
	}

	.arrow.left {
		border-right-color: #bdbdbd;
		border-left: 0;
	}

	.arrow.right {
		border-left-color: #bdbdbd;
		border-right: 0;
	}

	.sheet-tab {
		box-sizing: border-box;
		width: 65px;
		height: 18px;
		line-height: 17px;
		text-align: center;
		font-family: 'Noto Sans', 'Noto Sans CJK SC', sans-serif;
		border-right: 1px solid #b4b4b4;
		margin-top: -4px;
		position: relative;
		flex: none;
	}

	.sheet-tab.active {
		width: 64px;
		height: 25px;
		margin-top: 0;
		line-height: 23px;
		background: #fafafa;
		border-right: 0;
		border-bottom: 2px solid #217346;
		padding-right: 2px;
	}

	.sheet-tab.last {
		width: 168px;
		font-family: 'Noto Sans CJK SC', sans-serif;
		font-size: 12px;
		color: #5a5a5a;
	}

	.text-caret {
		position: absolute;
		left: 50px;
		top: 3px;
		width: 1px;
		height: 15px;
		background: #222;
	}

	.ibeam {
		position: absolute;
		left: 18px;
		top: 6px;
	}

	.add {
		margin-left: 31px;
		margin-top: 1px;
	}

	.hscroll {
		margin-left: 266px;
		display: flex;
		align-items: center;
		height: 14px;
		flex: none;
	}

	.dots {
		width: 3px;
		height: 14px;
		margin-right: 13px;
		background: radial-gradient(circle, #aaa 1px, transparent 1.200px) 0 0 / 3px 4px;
	}

	.scroll-btn {
		width: 13px;
		height: 14px;
		box-sizing: border-box;
		background: #fafafa;
		border: 1px solid #c8c8c8;
		display: flex;
		align-items: center;
		justify-content: center;
	}

	.scroll-btn i {
		border: 3px solid transparent;
		border-right: 4px solid #555;
		border-left: 0;
	}

	.track {
		width: 86px;
		height: 14px;
		background: #d9d9d9;
	}

	.thumb {
		width: 270px;
		height: 14px;
		box-sizing: border-box;
		background: #fff;
		border: 1px solid #c8c8c8;
	}

	.status {
		height: 22px;
		flex: none;
		background: #f3f3f3;
		display: flex;
		align-items: stretch;
		padding-left: 995px;
	}

	.view {
		width: 38px;
		display: flex;
		align-items: center;
		justify-content: center;
		flex: none;
	}

	.view.on {
		background: #c8c8c8;
		width: 37px;
	}

	.zoom-minus {
		width: 8px;
		height: 2px;
		background: #555;
		margin: 10px 0 0 8px;
		flex: none;
	}

	.zoom-line {
		flex: 1;
		height: 1px;
		background: #999;
		margin: 11px 0 0 4px;
	}

	.taskbar {
		height: 36px;
		flex: none;
		display: flex;
		align-items: center;
		background:
			linear-gradient(25deg, transparent 74%, rgba(255, 255, 255, 0.28) 75%, transparent 76.500%),
			linear-gradient(90deg, #3f7fa9 0, #2f6f9f 40%, #1f5a91 65%, #1c4f88 100%);
		border-top: 1px solid #7d9bb3;
		box-sizing: border-box;
		overflow: hidden;
	}

	.orb {
		margin-left: 8px;
	}

	.task-dots {
		width: 8px;
		height: 30px;
		margin-left: 10px;
		background: radial-gradient(circle, #0f3250 1px, transparent 1.300px) 0 0 / 3px 3px;
		flex: none;
	}

	.ie {
		margin-left: 18px;
	}

	.ie-e {
		font-family: 'Liberation Sans', sans-serif;
		font-size: 32px;
		font-weight: 700;
		fill: #3fa5e8;
		text-anchor: middle;
	}

	.win-group {
		display: flex;
		margin-left: 13px;
		height: 34px;
		width: 204px;
		flex: none;
		background: linear-gradient(#6d9cbd, #4d84ad);
		border: 1px solid #9cc0d6;
		box-sizing: border-box;
		border-radius: 2px;
	}

	.task-btn {
		display: flex;
		align-items: center;
		color: #dfeaf2;
		font-size: 11.500px;
		font-family: 'Noto Sans', 'Noto Sans CJK SC', sans-serif;
		white-space: nowrap;
	}

	.folder-btn {
		width: 102px;
		padding-left: 7px;
		gap: 12px;
		box-sizing: border-box;
		border-right: 1px solid #5e8fb3;
	}

	.folder-btn:last-child {
		border-right: 0;
	}

	.app-icons {
		display: flex;
		align-items: center;
		gap: 24px;
		margin-left: 12px;
		width: 205px;
		flex: none;
		box-sizing: border-box;
	}

	.wps {
		width: 100px;
		height: 34px;
		flex: none;
		box-sizing: border-box;
		background: linear-gradient(#4f85ab, #376f9c);
		border: 1px solid #7ea6c2;
		border-radius: 2px;
		padding-left: 6px;
		gap: 4px;
		overflow: hidden;
	}

	.excel {
		width: 100px;
		height: 34px;
		flex: none;
		box-sizing: border-box;
		margin-left: 4px;
		background: linear-gradient(#7ba7c6, #5d90b6);
		border: 1px solid #a8c8dc;
		border-radius: 2px;
		padding-left: 6px;
		gap: 5px;
	}

	.tray-dots {
		margin-left: 12px;
		height: 32px;
	}

	.tray {
		display: flex;
		align-items: center;
		margin-left: 9px;
		gap: 5px;
		color: #fff;
		flex: none;
	}

	.tray-right {
		display: flex;
		align-items: center;
		gap: 8px;
		margin-left: 5px;
	}

	.after-bt {
		margin-left: 2px;
	}

	.after-delta {
		margin-left: 3px;
	}

	.tray-text {
		font-size: 13px;
		width: 14px;
		margin-left: 1px;
	}

	.tray-dots-small {
		font-size: 9px;
		width: 12px;
		color: #cfe0ee;
		text-align: center;
	}

	.q {
		fill: #fff;
		font-family: 'Liberation Sans', sans-serif;
		font-size: 11px;
		font-weight: 700;
		text-anchor: middle;
	}

	.watermark {
		position: absolute;
		left: 1033px;
		top: 45px;
		display: flex;
		align-items: flex-start;
		gap: 8px;
		pointer-events: none;
		white-space: nowrap;
	}

	.watermark span {
		font-size: 36px;
		line-height: 42px;
		font-weight: 700;
		color: rgba(200, 215, 208, 0.5);
		margin-top: 6px;
	}
</style>
